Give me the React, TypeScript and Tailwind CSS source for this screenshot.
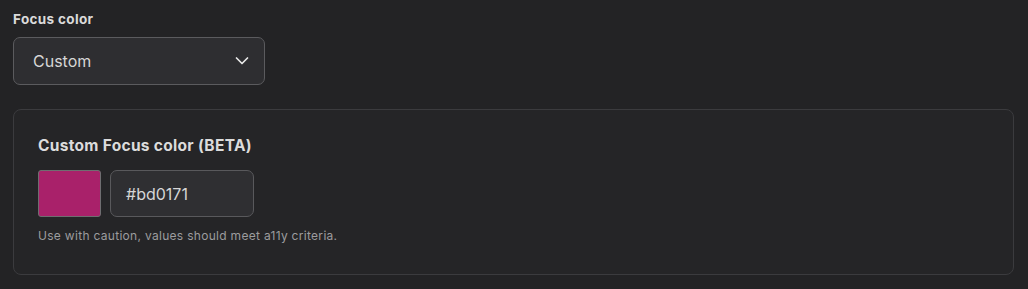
import React from "react";

export default function App() {
  return (
    <div className="w-[1028px] h-[289px] bg-[#232325] pl-[13px] pr-[14px] pt-[11px] font-['Inter',sans-serif] antialiased">
      <div className="text-[13.5px] font-bold leading-4 tracking-[0.35px] text-[#dadada]">Focus color</div>
      <div className="mt-[10px] flex h-[48px] w-[252px] items-center justify-between rounded-[7px] border border-[#5b5b5e] bg-[#2e2e31] pl-[19px] pr-[15px]">
        <span className="text-[16px] text-[#d6d6d6]">Custom</span>
        <svg width="14" height="14" viewBox="0 0 14 14" fill="none">
          <path d="M1.5 4 L7 9.5 L12.5 4" stroke="#e8e8e8" strokeWidth="1.7" strokeLinecap="round" strokeLinejoin="round" />
        </svg>
      </div>
      <div className="mt-[24px] h-[166px] rounded-[8px] border border-[#3b3b3e] bg-[#252527] pl-[24px] pt-[26px]">
        <div className="text-[15.5px] font-bold leading-5 tracking-[0.3px] text-[#dcdcdc]">Custom Focus color (BETA)</div>
        <div className="mt-[14px] flex gap-[9px]">
          <div className="h-[47px] w-[63px] rounded-[3px] border border-[#6e6e70] bg-[#a9216a]" />
          <div className="flex h-[47px] w-[144px] items-center rounded-[7px] border border-[#59595c] bg-[#2f2f32] pl-[15px] text-[16px] text-[#d6d6d6]">
            #bd0171
          </div>
        </div>
        <div className="mt-[11px] text-[12px] leading-4 tracking-[0.3px] text-[#9c9c9e]">Use with caution, values should meet a11y criteria.</div>
      </div>
    </div>
  );
}
